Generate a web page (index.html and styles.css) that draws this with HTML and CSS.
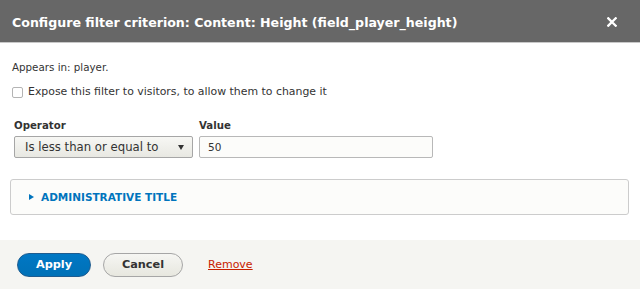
FILE: index.html
```html
<!DOCTYPE html>
<html>
<head>
<meta charset="utf-8">
<link rel="stylesheet" href="styles.css">
</head>
<body>
<div class="dialog">
  <div class="titlebar">
    <span class="title">Configure filter criterion: Content: Height (field_player_height)</span>
    <svg class="close" width="10" height="10" viewBox="0 0 10 10"><path d="M1.3 1.3 L8.7 8.7 M8.7 1.3 L1.3 8.7" stroke="#fff" stroke-width="2.3" stroke-linecap="square"/></svg>
  </div>
  <div class="content">
    <p class="appears">Appears in: player.</p>
    <div class="check-row">
      <span class="checkbox"></span>
      <span class="check-label">Expose this filter to visitors, to allow them to change it</span>
    </div>
    <div class="fields">
      <div class="field op">
        <div class="label">Operator</div>
        <div class="select"><span>Is less than or equal to</span><span class="arrow"></span></div>
      </div>
      <div class="field val">
        <div class="label">Value</div>
        <div class="input">50</div>
      </div>
    </div>
    <div class="details">
      <span class="tri"></span>
      <span class="summary">ADMINISTRATIVE TITLE</span>
    </div>
  </div>
  <div class="footer">
    <span class="btn primary">Apply</span>
    <span class="btn secondary">Cancel</span>
    <span class="danger">Remove</span>
  </div>
</div>
</body>
</html>
```
FILE: styles.css
```css
html, body {
  margin: 0;
  padding: 0;
  background: #fff;
}
.dialog {
  width: 640px;
  height: 289px;
  overflow: hidden;
  font-family: "DejaVu Sans", sans-serif;
  color: #333;
  display: flex;
  flex-direction: column;
}
.titlebar {
  height: 42px;
  background: #676767;
  border-bottom: 1px solid #c8c8c8;
  display: flex;
  align-items: center;
  justify-content: space-between;
  padding: 0 23px 0 12px;
  box-sizing: content-box;
}
.title {
  color: #fff;
  font-weight: bold;
  font-size: 12.6px;
  padding-top: 2px;
}
.close {
  display: block;
  margin-top: 2px;
}
.content {
  flex: 1;
  padding: 0 11px 0 10px;
}
.appears {
  margin: 17px 0 0 2px;
  font-size: 10.3px;
  line-height: 14px;
}
.check-row {
  margin: 11px 0 0 2px;
  display: flex;
  align-items: center;
  height: 14px;
}
.checkbox {
  width: 9px;
  height: 9px;
  border: 1px solid #b4b4b4;
  border-radius: 2px;
  background: #fff;
  margin-right: 5px;
}
.check-label {
  font-size: 10.9px;
  line-height: 14px;
}
.fields {
  margin: 20px 0 0 4px;
  display: flex;
  gap: 6px;
}
.label {
  font-weight: bold;
  font-size: 10.2px;
  line-height: 14px;
  margin-bottom: 3px;
}
.select {
  width: 177px;
  height: 20px;
  border: 1px solid #a6a6a6;
  border-radius: 2px;
  background: linear-gradient(#f7f7f4, #e8e8e2);
  box-sizing: content-box;
  display: flex;
  align-items: center;
  justify-content: space-between;
  font-size: 11.7px;
}
.select span:first-child {
  padding-left: 10px;
}
.arrow {
  width: 0;
  height: 0;
  border-left: 3.5px solid transparent;
  border-right: 3.5px solid transparent;
  border-top: 5px solid #333;
  margin-right: 8px;
}
.input {
  width: 224px;
  height: 20px;
  border: 1px solid #b8b8b8;
  border-radius: 2px;
  background: #fcfcfa;
  padding-left: 8px;
  display: flex;
  align-items: center;
  font-size: 10.5px;
}
.details {
  margin-top: 21px;
  height: 34px;
  border: 1px solid #cccccc;
  border-radius: 3px;
  background: #fcfcfa;
  display: flex;
  align-items: center;
  padding-left: 18px;
}
.tri {
  width: 0;
  height: 0;
  border-top: 3.5px solid transparent;
  border-bottom: 3.5px solid transparent;
  border-left: 5px solid #0074bd;
  margin-right: 7px;
}
.summary {
  color: #0074bd;
  font-weight: bold;
  font-size: 10.5px;
}
.footer {
  height: 49px;
  background: #f5f5f2;
  display: flex;
  align-items: center;
  padding-left: 17px;
}
.btn {
  height: 24px;
  box-sizing: border-box;
  border-radius: 12px;
  display: flex;
  align-items: center;
  justify-content: center;
  font-weight: bold;
  font-size: 11.3px;
}
.primary {
  width: 74px;
  background: linear-gradient(#0077c4, #0071b7);
  border: 1px solid #1e5c90;
  color: #fff;
}
.secondary {
  width: 80px;
  margin-left: 12px;
  background: linear-gradient(#f6f6f3, #e7e7df);
  border: 1px solid #a6a6a6;
  color: #333;
}
.danger {
  margin-left: 25px;
  color: #c72100;
  text-decoration: underline;
  font-size: 11px;
}
```
